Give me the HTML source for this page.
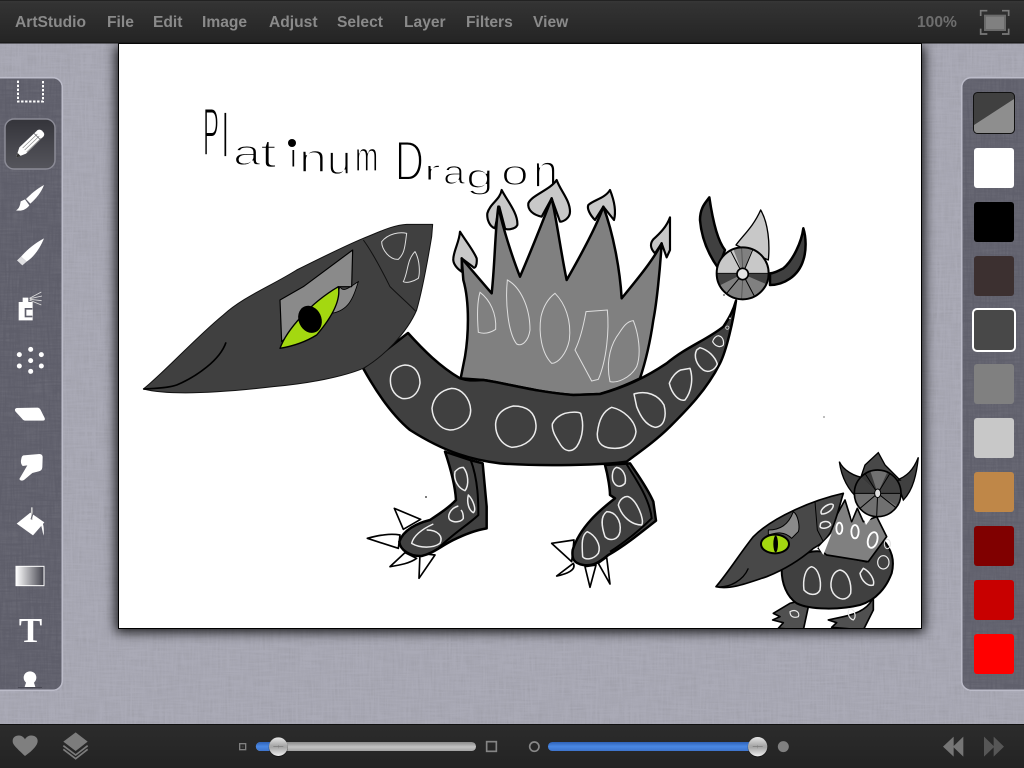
<!DOCTYPE html>
<html lang="en">
<head>
<meta charset="utf-8">
<title>ArtStudio</title>
<style>
html,body{margin:0;padding:0;width:1024px;height:768px;overflow:hidden;background:#aaaab6}
svg{display:block;position:absolute;left:0;top:0}
.m{font:bold 15.6px "Liberation Sans",sans-serif;fill:#8a8a8a}
.h{font:100px "Liberation Sans",sans-serif;fill:#000;stroke:#fff;stroke-width:2.4px}
.b{fill:#404040;stroke:#000;stroke-width:7.5;stroke-linejoin:round}
.s{fill:none;stroke:#ececec;stroke-width:4.5;stroke-linejoin:round}
.c{fill:none;stroke:#dedede;stroke-width:3}
.f{fill:#c8c8c8;stroke:#000;stroke-width:6.5;stroke-linejoin:round}
.w{fill:#fff;stroke:#000;stroke-width:5;stroke-linejoin:round}
</style>
</head>
<body>
<svg width="1024" height="768" viewBox="0 0 1024 768" xmlns="http://www.w3.org/2000/svg">
<defs>
<filter id="linen" x="0" y="0" width="100%" height="100%">
<feTurbulence type="fractalNoise" baseFrequency="0.55 0.04" numOctaves="2" seed="3" result="a"/>
<feTurbulence type="fractalNoise" baseFrequency="0.04 0.55" numOctaves="2" seed="8" result="b"/>
<feBlend in="a" in2="b" mode="multiply"/>
<feColorMatrix type="matrix" values="0 0 0 0 .3  0 0 0 0 .3  0 0 0 0 .34  1.1 1.1 0 0 -.72"/>
</filter>
<filter id="sh" x="-10%" y="-10%" width="120%" height="120%"><feGaussianBlur stdDeviation="6"/></filter>
<linearGradient id="top" x1="0" y1="0" x2="0" y2="1"><stop offset="0" stop-color="#393939"/><stop offset=".08" stop-color="#333"/><stop offset="1" stop-color="#242424"/></linearGradient>
<linearGradient id="bot" x1="0" y1="0" x2="0" y2="1"><stop offset="0" stop-color="#2c2c2c"/><stop offset="1" stop-color="#232323"/></linearGradient>
<linearGradient id="sel" x1="0" y1="0" x2="0" y2="1"><stop offset="0" stop-color="#34343a"/><stop offset="1" stop-color="#55555c"/></linearGradient>
<linearGradient id="grad" x1="0" y1="0" x2="1" y2="0"><stop offset="0" stop-color="#fff"/><stop offset="1" stop-color="#40404a"/></linearGradient>
<linearGradient id="blue" x1="0" y1="0" x2="0" y2="1"><stop offset="0" stop-color="#2e62b8"/><stop offset=".5" stop-color="#4a88e4"/><stop offset="1" stop-color="#3d74cc"/></linearGradient>
<linearGradient id="grey" x1="0" y1="0" x2="0" y2="1"><stop offset="0" stop-color="#8a8a8a"/><stop offset=".55" stop-color="#c2c2c2"/><stop offset="1" stop-color="#a2a2a2"/></linearGradient>
<linearGradient id="knob" x1="0" y1="0" x2="0" y2="1"><stop offset="0" stop-color="#e6e6e6"/><stop offset=".45" stop-color="#a8a8a8"/><stop offset=".55" stop-color="#a8a8a8"/><stop offset="1" stop-color="#f0f0f0"/></linearGradient>
<clipPath id="cv"><rect x="119" y="44" width="802" height="584"/></clipPath>
<clipPath id="lp"><rect x="0" y="80" width="62" height="608"/></clipPath>
<clipPath id="sc"><circle cx="908" cy="310" r="78"/></clipPath>
<clipPath id="sc2"><circle cx="533" cy="160" r="70"/></clipPath>
</defs>

<rect width="1024" height="768" fill="#aaaab6"/>
<rect width="1024" height="768" filter="url(#linen)" opacity=".65"/>

<!-- left panel -->
<path d="M0,77H53a10,10 0 0 1 10,10V681a10,10 0 0 1 -10,10H0Z" fill="#5e5e6a"/>
<path d="M0,77H53a10,10 0 0 1 10,10V681a10,10 0 0 1 -10,10H0Z" filter="url(#linen)" opacity=".3"/>
<path d="M0,77.7H53a9.3,9.3 0 0 1 9.3,9.3V681a9.3,9.3 0 0 1 -9.3,9.3H0" fill="none" stroke="#bcbcc9" stroke-width="1.6"/>

<!-- right panel -->
<path d="M1024,77H971a10,10 0 0 0 -10,10V681a10,10 0 0 0 10,10H1024Z" fill="#60606c"/>
<path d="M1024,77H971a10,10 0 0 0 -10,10V681a10,10 0 0 0 10,10H1024Z" filter="url(#linen)" opacity=".3"/>
<path d="M1024,77.7H971a9.3,9.3 0 0 0 -9.3,9.3V681a9.3,9.3 0 0 0 9.3,9.3H1024" fill="none" stroke="#bcbcc9" stroke-width="1.6"/>

<!-- swatches -->
<rect x="973.5" y="92.5" width="41" height="41" rx="4" fill="#404040" stroke="#111"/>
<path d="M974,130V125L1014,99V129a4,4 0 0 1 -4,4H978a4,4 0 0 1 -4,-3Z" fill="#8e8e8e"/>
<rect x="974" y="148" width="40" height="40" rx="3" fill="#fff"/>
<rect x="974" y="202" width="40" height="40" rx="3" fill="#000"/>
<rect x="974" y="256" width="40" height="40" rx="3" fill="#3c3030"/>
<rect x="973" y="309" width="42" height="42" rx="4" fill="#484848" stroke="#fff" stroke-width="2"/>
<rect x="974" y="364" width="40" height="40" rx="3" fill="#808080"/>
<rect x="974" y="418" width="40" height="40" rx="3" fill="#c8c8c8"/>
<rect x="974" y="472" width="40" height="40" rx="3" fill="#bf8748"/>
<rect x="974" y="526" width="40" height="40" rx="3" fill="#800000"/>
<rect x="974" y="580" width="40" height="40" rx="3" fill="#c80000"/>
<rect x="974" y="634" width="40" height="40" rx="3" fill="#ff0000"/>

<!-- selected tool -->
<rect x="5" y="119" width="50" height="50" rx="9" fill="url(#sel)" stroke="#8b8b96" stroke-width="1.5"/>

<!-- tools upper -->
<g clip-path="url(#lp)">
<rect x="18" y="70" width="25" height="31.5" fill="none" stroke="#fff" stroke-width="2" stroke-dasharray="2.4 1.6"/>
</g>
<g transform="translate(0 60) scale(.33333)" fill="#fff">
<path d="M48,293L58,262L113,210Q120,207 126,212L131,218Q135,224 130,230L78,281Z"/>
<path d="M68,264L112,222M74,270L118,228M80,276L124,234" stroke="#8a8a8a" stroke-width="2" fill="none"/>
<path d="M102,220L122,240" stroke="#55555c" stroke-width="2" fill="none"/>
<path d="M48,293L53,279L62,288Z" fill="#333"/>
<path d="M132,375C108,388 92,403 78,417L91,431C110,414 124,396 132,375Z"/>
<path d="M62,424L75,418L88,436C80,447 66,455 48,451C58,445 60,436 62,424Z"/>
<path d="M132,535C104,550 80,570 63,590L80,605C102,590 120,565 132,535Z"/>
<path d="M51,601L63,590L80,605L67,616Z" opacity=".8"/>
<path d="M56,726H68V713H85V726H98V781H56Z"/>
<path d="M74,744H97V772H74Z" fill="#5e5e6a"/>
<path d="M79,749H98V767H79Z"/>
<path d="M88,715L124,696M90,716L126,708M90,718L125,722M88,720L124,735" stroke="#ddd" stroke-width="2.5" fill="none"/>
<circle cx="92" cy="868" r="7.5"/><circle cx="58" cy="884" r="7.5"/><circle cx="124" cy="884" r="7.5"/><circle cx="92" cy="902" r="7.5"/><circle cx="58" cy="918" r="7.5"/><circle cx="124" cy="918" r="7.5"/><circle cx="92" cy="934" r="7.5"/>
</g>
<!-- tools lower -->
<g transform="translate(0 380) scale(.33333)" fill="#fff">
<path d="M50,84L112,83Q118,83 122,90L134,114Q137,122 128,122L76,122Q70,122 66,116L46,94Q42,86 50,84Z"/>
<path d="M70,226L118,222Q128,222 128,232L127,262Q126,272 116,274L97,279L72,300Q62,305 58,297L82,256L68,258Q60,250 64,236Q65,228 70,226Z"/>
<path d="M91,398L133,427L99,466L50,431Z"/>
<path d="M93,382H98V420H93Z" fill="#ccc"/>
<path d="M100,398L93,418" stroke="#5e5e6a" stroke-width="3"/>
<path d="M118,420C130,424 133,440 131,467C127,455 126,440 118,420Z"/>
<rect x="48" y="559" width="84" height="58" fill="url(#grad)" stroke="#fff" stroke-width="3"/>
<circle cx="90" cy="893" r="19"/>
<path d="M79,905H101L106,921H74Z"/>
<path d="M54,922H126" stroke="#3a3a44" stroke-width="2"/>
</g>
<text x="30.5" y="642" text-anchor="middle" style="font:bold 35px 'Liberation Serif',serif;fill:#fff">T</text>

<!-- canvas -->
<rect x="116" y="46" width="808" height="586" fill="#000" opacity=".9" filter="url(#sh)"/>
<rect x="118" y="43" width="804" height="586" fill="#000"/>
<rect x="119" y="44" width="802" height="584" fill="#fff"/>

<g clip-path="url(#cv)">
<!-- handwriting -->
<g class="h">
<text transform="matrix(.24 0 0 .68 203 155)" style="stroke-width:3px">P</text>
<text transform="matrix(.3 0 0 .62 222 157)" style="stroke-width:3px">l</text>
<text transform="matrix(.5 0 0 .36 233 165)" style="stroke-width:4px">a</text>
<text transform="matrix(.6 0 0 .4 260 167)" style="stroke-width:4px">t</text>
<text transform="matrix(.3 0 0 .33 290 167)" style="stroke-width:3px">i</text>
<text transform="matrix(.5 0 0 .4 299 172)" style="stroke-width:4px">n</text>
<text transform="matrix(.44 0 0 .42 327 174)" style="stroke-width:4px">u</text>
<text transform="matrix(.28 0 0 .42 355 171)" style="stroke-width:3px">m</text>
<text transform="matrix(.4 0 0 .56 395 180)" style="stroke-width:3.5px">D</text>
<text transform="matrix(.5 0 0 .28 424 180)" style="stroke-width:4px">r</text>
<text transform="matrix(.4 0 0 .34 443 184)" style="stroke-width:4px">a</text>
<text transform="matrix(.5 0 0 .34 466 188)" style="stroke-width:4px">g</text>
<text transform="matrix(.5 0 0 .36 501 185)" style="stroke-width:4px">o</text>
<text transform="matrix(.45 0 0 .46 533 187)" style="stroke-width:4px">n</text>
</g>
<circle cx="292" cy="143" r="4" fill="#000"/>

<!-- legs -->
<g transform="translate(350 430) scale(.33333)">
<path class="w" d="M212,268L133,235L160,298Z"/>
<path class="w" d="M150,315C120,310 90,315 52,325L145,355Z"/>
<path class="w" d="M165,368L120,410C150,405 180,400 200,385Z"/>
<path class="w" d="M210,370L207,445L255,375Z"/>
<path class="b" d="M285,65C300,110 315,160 318,210C300,230 270,250 240,270C200,280 160,300 148,335C150,360 180,380 215,378C250,370 270,350 310,330C340,315 380,300 410,295L410,230L398,100L360,90Z"/>
<path d="M362,90C385,150 385,220 385,255C360,280 310,310 265,355" fill="none" stroke="#000" stroke-width="6"/>
<path class="s" d="M340,112C355,130 358,165 345,182C325,175 310,150 315,125C325,115 330,112 340,112Z"/>
<path class="s" d="M355,195C370,210 380,240 370,248C355,240 350,215 355,195Z"/>
<path class="s" d="M325,228C300,235 290,260 300,270C315,280 335,275 340,265C340,255 338,245 333,240"/>
<path class="s" d="M250,282C210,300 190,320 185,340C210,355 250,355 270,340C280,320 265,300 230,300"/>
<path class="w" d="M672,330L605,340L665,395Z"/>
<path class="w" d="M670,400C680,420 650,432 620,438Z"/>
<path class="w" d="M705,410L720,472L738,405Z"/>
<path class="w" d="M745,400L780,462L770,382Z"/>
<path class="b" d="M765,105C775,140 780,180 780,195L795,205C750,240 690,290 668,360C665,385 670,400 700,405C730,410 750,395 775,375C820,350 870,310 918,272L910,215C890,170 860,130 840,100Z"/>
<path d="M828,100C860,150 900,210 905,265C870,300 820,340 780,365" fill="none" stroke="#000" stroke-width="6"/>
<path class="s" d="M800,112C820,115 830,140 825,160C810,175 795,170 788,150C785,130 790,115 800,112Z"/>
<path class="s" d="M835,200C860,210 885,270 875,285C845,285 815,260 805,225C810,205 825,198 835,200Z"/>
<path class="s" d="M770,245C795,245 815,270 810,305C805,330 780,335 765,320C755,290 750,260 770,245Z"/>
<path class="s" d="M712,305C735,315 755,345 745,370C730,390 705,390 698,380C695,340 695,315 712,305Z"/>
</g>

<!-- crown, body, tail ornament -->
<g transform="translate(440 170) scale(.33333)">
<path class="f" d="M60,185C75,210 100,240 110,265C112,285 105,300 98,290L65,265L65,305C50,295 38,280 40,265C42,240 58,215 60,185Z"/>
<path class="f" d="M185,60C200,90 235,130 232,165C225,180 195,180 195,175L178,110L165,175C150,170 140,150 142,130C150,100 180,90 185,60Z"/>
<path class="f" d="M350,30C360,60 390,90 390,125C390,145 370,155 360,155L335,85L305,140C280,135 262,120 265,100C275,75 330,60 350,30Z"/>
<path class="f" d="M510,60C520,85 530,120 522,150L490,110L465,150C450,135 440,115 445,105C460,90 495,85 510,60Z"/>
<path class="f" d="M690,142L690,240L680,262L665,220L645,250C630,235 630,220 640,208C660,190 680,170 690,142Z"/>
<path d="M62,625L75,560C85,500 90,400 70,330L65,265L155,370C165,280 165,180 175,110C190,180 220,270 240,320C270,250 310,150 335,85C350,150 365,260 380,330C420,260 470,170 490,110C520,190 540,300 545,385C590,330 640,270 665,220C660,300 650,400 640,450C630,520 615,580 600,625C560,645 520,660 480,672L400,675C280,665 200,640 130,630Z" fill="#808080" stroke="#000" stroke-width="7.5" stroke-linejoin="round"/>
<path class="c" d="M120,367C150,390 170,430 167,478C150,490 130,492 115,487C112,450 110,400 120,367Z"/>
<path class="c" d="M202,330C240,350 270,410 270,480C265,515 245,530 230,522C205,490 195,400 202,330Z"/>
<path class="c" d="M345,370C375,400 395,450 388,510C380,550 355,580 335,580C305,550 295,490 303,440C310,410 325,385 345,370Z"/>
<path class="c" d="M438,425L502,420C508,480 500,570 475,628L455,633L405,540C420,510 430,470 438,425Z"/>
<path class="c" d="M580,452C595,490 605,550 590,590C570,625 530,640 510,635C500,590 505,540 530,500C545,480 555,455 580,452Z"/>

<path class="b" d="M-96,489C-50,540 0,590 60,625C90,635 110,630 130,630C200,640 280,665 400,675L480,672C560,650 620,620 680,580C740,530 800,510 850,470C870,440 880,420 888,392C880,450 860,540 840,580C800,660 740,720 690,770C650,810 600,845 560,875C500,885 300,890 180,880C100,870 20,850 -90,780C-150,730 -200,650 -231,594Z"/>

<path class="s" d="M-105,585C-75,585 -60,610 -60,640C-65,675 -90,690 -115,685C-140,675 -152,650 -148,620C-145,600 -125,587 -105,585Z"/>
<path class="s" d="M35,655C65,655 90,685 92,720C92,755 60,780 30,780C0,778 -22,750 -24,715C-20,680 5,660 35,655Z"/>
<path class="s" d="M220,708C260,708 285,725 288,765C290,805 255,830 215,832C185,825 165,795 167,760C170,730 190,715 220,708Z"/>
<path class="s" d="M375,730C395,725 415,725 422,730C432,760 430,800 410,830C395,848 375,845 362,825C350,805 335,785 337,762C345,745 360,735 375,730Z"/>
<path class="s" d="M515,712C550,720 585,750 588,785C585,815 560,835 525,835C495,835 470,825 472,790C475,760 485,725 515,712Z"/>
<path class="s" d="M582,672C620,660 655,675 672,705C680,735 675,770 645,772C615,765 600,735 590,710Z"/>
<path class="s" d="M722,600L750,595C760,625 755,665 735,690C715,695 695,670 688,640C695,620 710,605 722,600Z"/>
<path class="s" d="M780,533C805,540 825,560 832,582C825,600 805,610 790,600C770,585 760,560 770,540Z"/>
<path class="s" style="stroke-width:3.5" d="M835,497C850,500 852,515 850,525C840,535 825,528 818,515C820,505 828,498 835,497Z"/>
<circle cx="862" cy="473" r="5" fill="none" stroke="#ddd" stroke-width="2.5"/>
<circle cx="870" cy="445" r="2.5" fill="#eee"/>
<circle cx="852" cy="375" r="3" fill="#777"/>

<path class="b" d="M808,82C800,95 780,110 780,150C785,210 810,260 835,295L855,240C830,210 815,130 808,82Z"/>
<path class="b" d="M1090,175C1085,215 1060,270 1030,295C1010,305 1000,310 990,310L990,345C1030,345 1075,320 1090,270C1100,240 1098,200 1090,175Z"/>
<path d="M962,120C940,170 910,195 888,225L985,270C990,220 985,160 962,120Z" fill="#c8c8c8" stroke="#000" stroke-width="4" stroke-linejoin="round"/>
<g clip-path="url(#sc)">
<rect x="820" y="220" width="180" height="180" fill="#808080"/>
<path d="M908,312L800,312L800,200L866,200Z" fill="#c8c8c8"/>
<path d="M908,312L950,200L1010,200L1010,312Z" fill="#c8c8c8"/>
<path d="M908,312L1010,312L1010,360L985,345Z" fill="#404040"/>
<path d="M908,312L800,312L800,360L838,347Z" fill="#404040"/>
<path d="M830,310H990M908,312L868,235M908,312L940,235M908,312L860,370M908,312L945,382" stroke="#000" stroke-width="3"/>
<path d="M908,312L905,228M908,312L905,390" stroke="#444" stroke-width="2"/>
</g>
<circle cx="908" cy="310" r="78" fill="none" stroke="#000" stroke-width="6"/>
<circle cx="908" cy="312" r="17" fill="#e4e4e4" stroke="#000" stroke-width="5"/>
</g>

<!-- head -->
<g transform="translate(130 90) scale(.33333)">
<path d="M40,897C100,850 200,740 280,675C340,620 420,590 500,540C580,500 640,470 700,445C750,425 790,405 830,403L908,403L905,440C895,500 880,590 860,660C830,730 760,800 700,835C640,860 540,880 430,890C300,905 130,920 40,897Z" fill="#404040" stroke="#111" stroke-width="3" stroke-linejoin="round"/>
<path d="M700,450C730,490 760,550 780,590C810,620 835,640 858,665" fill="none" stroke="#111" stroke-width="3"/>
<path d="M40,897C70,895 110,895 140,885C200,860 270,810 288,757" fill="none" stroke="#000" stroke-width="5"/>
<path class="c" d="M755,455C775,430 810,425 830,430C825,465 825,490 805,508C780,510 755,480 755,455Z"/>
<path class="c" d="M855,485C870,510 870,550 865,565C850,575 830,580 820,575C835,545 830,510 855,485Z"/>
<path d="M630,590C640,610 660,590 685,575C670,620 660,660 605,670L620,620Z" fill="#8a8a8a" stroke="#000" stroke-width="2.5"/>
<path d="M450,630L520,590L668,480L665,590L625,590L455,755Z" fill="#8a8a8a" stroke="#000" stroke-width="3.5" stroke-linejoin="round"/>
<path d="M450,775C470,720 540,640 625,590C635,640 590,700 560,735C520,760 480,770 450,775Z" fill="#a4d810" stroke="#000" stroke-width="4" stroke-linejoin="round"/>
<ellipse cx="540" cy="688" rx="34" ry="42" transform="rotate(-25 540 688)" fill="#000"/>
</g>

<!-- small dragon -->
<g transform="translate(700 440) scale(.33333)">
<path d="M290,485L270,490L220,520L240,530L218,540L250,548L235,565L310,570L325,500Z" fill="#505050" stroke="#000" stroke-width="5" stroke-linejoin="round"/>
<path d="M520,470C510,500 480,520 430,530L385,540L410,548L395,562L490,570L520,510Z" fill="#505050" stroke="#000" stroke-width="5" stroke-linejoin="round"/>
<path class="s" style="stroke-width:3.5" d="M270,515C290,505 300,520 295,530C280,535 270,530 270,515Z"/>
<path class="s" style="stroke-width:3.5" d="M450,505C465,510 470,530 460,540C445,535 440,515 450,505Z"/>
<path class="b" style="stroke-width:6" d="M245,390C260,350 350,320 380,340L500,365L550,300C575,330 585,360 575,400C560,440 530,480 480,495C420,510 330,510 290,490C260,470 245,430 245,390Z"/>
<path d="M355,325L435,180L455,245L472,205L490,245L530,230L560,290L505,365L380,345Z" fill="#808080" stroke="#000" stroke-width="5" stroke-linejoin="round"/>
<path d="M48,440C90,390 120,340 160,290C220,230 340,180 430,160C420,190 410,240 390,280C370,310 350,320 340,325C300,360 250,390 200,410C140,430 90,450 48,440Z" fill="#484848" stroke="#000" stroke-width="5" stroke-linejoin="round"/>
<path d="M355,322L395,280L370,345Z" fill="#fff"/>
<path d="M445,190L470,200L455,240Z" fill="#fff"/>
<path d="M490,235L515,232L498,255Z" fill="#fff"/>
<path d="M48,440C90,445 130,420 145,385" fill="none" stroke="#000" stroke-width="4"/>
<path d="M345,185L352,270L370,305" fill="none" stroke="#000" stroke-width="3"/>
<path d="M205,270C240,270 265,255 280,215C295,225 300,260 295,275L275,295C250,270 225,280 205,285Z" fill="#8a8a8a" stroke="#000" stroke-width="3"/>
<ellipse cx="225" cy="312" rx="42" ry="28" fill="#a4d810" stroke="#000" stroke-width="6"/>
<ellipse cx="227" cy="312" rx="7" ry="25" fill="#000"/>
<path class="s" d="M365,210C375,195 395,188 400,195C400,210 380,222 365,222C362,218 362,215 365,210Z"/>
<path class="s" d="M362,250C375,240 390,245 392,255C385,265 365,268 360,260Z"/>
<ellipse cx="418" cy="265" rx="9" ry="17" fill="none" stroke="#fff" stroke-width="5.5"/>
<ellipse cx="465" cy="275" rx="11" ry="20" fill="none" stroke="#fff" stroke-width="5.5"/>
<ellipse cx="518" cy="300" rx="14" ry="24" transform="rotate(15 518 300)" fill="none" stroke="#fff" stroke-width="5.5"/>
<ellipse cx="562" cy="312" rx="9" ry="14" fill="none" stroke="#ddd" stroke-width="3"/>
<ellipse cx="550" cy="367" rx="17" ry="20" fill="none" stroke="#eee" stroke-width="3.5"/>
<path class="s" d="M335,380C355,385 365,420 360,450C350,470 325,465 312,450C308,420 315,385 335,380Z"/>
<path class="s" d="M420,390C445,395 455,430 452,460C440,485 415,480 400,460C385,435 395,395 420,390Z"/>
<path class="s" d="M490,385C510,395 525,420 520,435C505,440 485,425 480,400Z"/>
<path d="M418,65C425,115 445,150 478,180L500,115C460,110 430,90 418,65Z" fill="#404040" stroke="#000" stroke-width="4"/>
<path d="M655,52C640,90 620,110 590,120L610,180C640,150 650,100 655,52Z" fill="#404040" stroke="#000" stroke-width="4"/>
<path d="M535,38L495,75L478,125L600,120L555,75Z" fill="#484848" stroke="#000" stroke-width="4"/>
<g clip-path="url(#sc2)">
<rect x="460" y="90" width="146" height="146" fill="#707070"/>
<path d="M533,160L460,90L510,90Z" fill="#383838"/>
<path d="M533,160L565,90L610,90L610,160Z" fill="#404040"/>
<path d="M533,160L460,160L460,90Z" fill="#404040"/>
<path d="M533,160L610,160L610,210Z" fill="#585858"/>
<path d="M533,160L465,160M533,160L600,160M533,160L495,100M533,160L570,100M533,160L480,205M533,160L590,205M533,160L530,230" stroke="#000" stroke-width="3"/>
</g>
<circle cx="533" cy="160" r="70" fill="none" stroke="#000" stroke-width="5"/>
<ellipse cx="533" cy="160" rx="9" ry="13" fill="#ddd" stroke="#000" stroke-width="3"/>
</g>

<circle cx="426" cy="497" r="1" fill="#555"/>
<circle cx="824" cy="417" r="1" fill="#aaa"/>
</g>

<!-- top bar -->
<rect width="1024" height="43" fill="url(#top)"/>
<rect y="0" width="1024" height="1" fill="#222"/>
<rect y="42.5" width="1024" height="1" fill="#111"/>
<text class="m" x="15" y="27">ArtStudio</text>
<text class="m" x="107" y="27">File</text>
<text class="m" x="153" y="27">Edit</text>
<text class="m" x="202" y="27">Image</text>
<text class="m" x="269" y="27">Adjust</text>
<text class="m" x="337" y="27">Select</text>
<text class="m" x="404" y="27">Layer</text>
<text class="m" x="466" y="27">Filters</text>
<text class="m" x="533" y="27">View</text>
<text class="m" x="917" y="27" style="fill:#6e6e6e">100%</text>
<g transform="translate(900 0) scale(.33333)" fill="none" stroke="#7a7a7a" stroke-width="5">
<rect x="255" y="47" width="60" height="43" fill="#808080" stroke="#6a6a6a" stroke-width="6"/>
<path d="M242,48V32H262M306,32H326V48M242,86V102H262M306,102H326V86"/>
</g>

<!-- bottom bar -->
<rect y="724" width="1024" height="44" fill="url(#bot)"/>
<rect y="724" width="1024" height="1" fill="#111"/>
<g transform="translate(0 715) scale(.33333)">
<path d="M75,123C45,95 38,88 38,78C38,65 50,60 60,62C67,63 72,68 75,73C78,68 83,63 90,62C100,60 113,65 113,78C113,90 100,105 75,123Z" fill="#7f7f7f"/>
<path d="M227,52L263,80L227,108L190,80Z" fill="#7c7c7c"/>
<path d="M190,92L227,120L263,92M190,103L227,131L263,103" fill="none" stroke="#7c7c7c" stroke-width="5"/>
<rect x="719" y="86" width="18" height="18" fill="none" stroke="#808080" stroke-width="4"/>
<rect x="725" y="92" width="6" height="6" fill="#3a3a3a"/>
<rect x="1460" y="80" width="29" height="29" fill="none" stroke="#858585" stroke-width="5"/>
<rect x="768" y="81" width="660" height="27" rx="13" fill="url(#grey)"/>
<path d="M781,81H835V108H781A13,13 0 0 1 781,81Z" fill="url(#blue)"/>
<circle cx="835" cy="97" r="29" fill="#000" opacity=".45"/>
<circle cx="835" cy="95" r="28" fill="url(#knob)"/>
<path d="M820,95H850" stroke="#666" stroke-width="1.5"/>
<path d="M835,90V100" stroke="#777" stroke-width="1"/>
</g>
<g transform="translate(512 715) scale(.33333)">
<circle cx="67" cy="95" r="14" fill="none" stroke="#888" stroke-width="5"/>
<rect x="108" y="81" width="630" height="27" rx="13" fill="url(#blue)"/>
<circle cx="737" cy="97" r="30" fill="#000" opacity=".45"/>
<circle cx="737" cy="95" r="29" fill="url(#knob)"/>
<path d="M722,95H752" stroke="#666" stroke-width="1.5"/>
<path d="M737,90V100" stroke="#777" stroke-width="1"/>
<circle cx="814" cy="95" r="16.5" fill="#808080"/>
<path d="M1293,95L1325,65V93L1354,65V125L1325,97V125Z" fill="#757575"/>
<path d="M1416,65L1445,93V65L1476,95L1445,125V97L1416,125Z" fill="#565656"/>
</g>
</svg>
</body>
</html>
